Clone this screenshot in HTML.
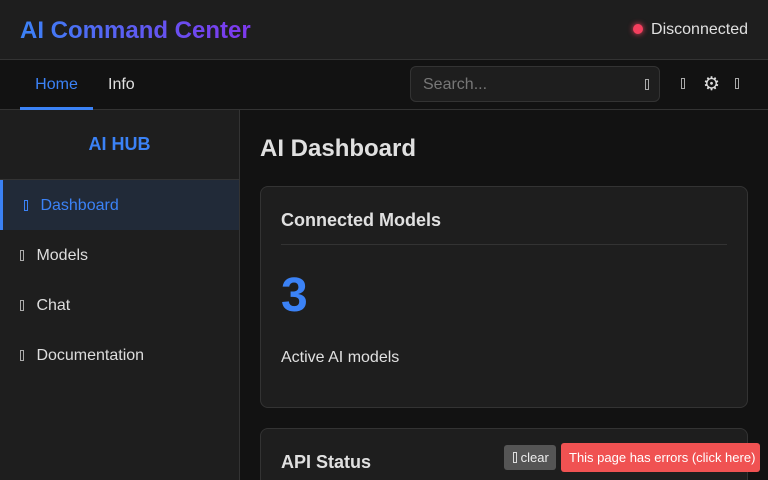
<!DOCTYPE html>
<html><head><meta charset="utf-8"><style>
*{box-sizing:border-box;margin:0;padding:0}
html,body{width:768px;height:480px;overflow:hidden}
body{background:#121212;font-family:"Liberation Sans",sans-serif;color:#e0e0e0;position:relative}
.tofu{display:inline-block;width:4px;height:11px;border:1px solid #aaa;vertical-align:-1px}
header{position:absolute;left:0;top:0;width:768px;height:60px;background:#1e1e1e;border-bottom:1px solid #333}
.logo{position:absolute;left:20px;top:17px;font-size:24px;font-weight:bold;background:linear-gradient(90deg,#3b82f6,#7c3aed 95%);-webkit-background-clip:text;background-clip:text;color:transparent}
.status{position:absolute;right:20px;top:21px;font-size:16px;color:#e0e0e0}
.dot{display:inline-block;width:10px;height:10px;border-radius:50%;background:#f43f5e;box-shadow:0 0 6px #f43f5e;margin-right:8px;vertical-align:0}
nav{position:absolute;left:0;top:60px;width:768px;height:50px;background:#121212;border-bottom:1px solid #333}
.tab{position:absolute;top:16px;font-size:16px}
.home{left:20px;width:73px;height:34px;text-align:center;color:#3b82f6;border-bottom:3px solid #3b82f6}
.search{position:absolute;left:410px;top:6px;width:250px;height:36px;border:1px solid #333;border-radius:6px;background:#1e1e1e;color:#777;font-size:16px;padding:9px 12px}
.search .tofu{position:absolute;right:10px;top:12px}
.ic{position:absolute;top:18px}
aside{position:absolute;left:0;top:110px;width:240px;height:370px;background:#1e1e1e;border-right:1px solid #333}
.hub{height:70px;border-bottom:1px solid #333;text-align:center;padding-top:24px;font-size:18px;font-weight:bold;color:#3b82f6}
.item{height:50px;padding:17px 20px;font-size:16px;color:#ddd}
.item .tofu{margin-right:8px}
.item.act{background:#212a38;color:#3b82f6;border-left:3px solid #3b82f6;padding-left:21px}
.item.act .tofu{border-color:#3b82f6}
h1{position:absolute;left:260px;top:135px;font-size:24px;color:#e0e0e0}
.card{position:absolute;left:260px;width:488px;background:#1e1e1e;border:1px solid #333;border-radius:8px}
.card h2{font-size:18px;margin:23px 20px 0;padding-bottom:13px;border-bottom:1px solid #333}
.big{font-size:48px;font-weight:bold;color:#3b82f6;margin:23px 20px 0}
.sub{margin:26px 20px 0;font-size:16px}
.clear{position:absolute;left:504px;top:445px;width:52px;height:25px;background:#555;border-radius:3px;font-size:13px;color:#eee;padding:5px 9px;white-space:nowrap}
.err{position:absolute;left:561px;top:443px;width:199px;height:29px;background:#f05252;border-radius:3px;font-size:13px;color:#fff;padding:7px 8px;white-space:nowrap}
</style></head><body>
<header><div class="logo">AI Command Center</div><div class="status"><span class="dot"></span>Disconnected</div></header>
<nav><div class="tab home">Home</div><div class="tab" style="left:108px">Info</div>
<div class="search">Search...<span class="tofu"></span></div>
<span class="ic tofu" style="left:681px;top:18px"></span>
<span class="ic" style="left:703px;top:13px;font-size:19px;color:#ddd">⚙</span>
<span class="ic tofu" style="left:735px"></span>
</nav>
<aside><div class="hub">AI HUB</div>
<div class="item act"><span class="tofu"></span> Dashboard</div>
<div class="item"><span class="tofu"></span> Models</div>
<div class="item"><span class="tofu"></span> Chat</div>
<div class="item"><span class="tofu"></span> Documentation</div>
</aside>
<h1>AI Dashboard</h1>
<div class="card" style="top:186px;height:222px"><h2>Connected Models</h2><div class="big">3</div><div class="sub">Active AI models</div></div>
<div class="card" style="top:428px;height:52px;border-bottom:none;border-radius:8px 8px 0 0;overflow:hidden"><h2 style="border:none;margin-top:23px">API Status</h2></div>
<div class="clear"><span class="tofu" style="border-color:#ddd"></span> clear</div>
<div class="err">This page has errors (click here)</div>
</body></html>
